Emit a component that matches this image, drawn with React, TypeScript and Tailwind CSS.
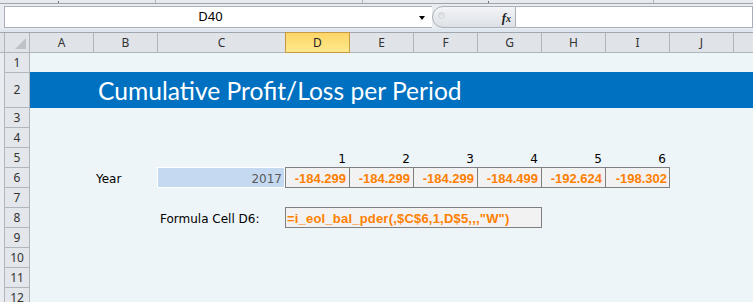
import React from 'react';

const COLS = [
  { id: 'A', w: 'w-[64px]' },
  { id: 'B', w: 'w-[64px]' },
  { id: 'C', w: 'w-[128px]' },
  { id: 'D', w: 'w-[64px]' },
  { id: 'E', w: 'w-[64px]' },
  { id: 'F', w: 'w-[64px]' },
  { id: 'G', w: 'w-[64px]' },
  { id: 'H', w: 'w-[64px]' },
  { id: 'I', w: 'w-[64px]' },
  { id: 'J', w: 'w-[64px]' },
];

const VALUES = ['-184.299', '-184.299', '-184.299', '-184.499', '-192.624', '-198.302'];

const CELL_FONT = "font-['DejaVu_Sans',sans-serif] text-[12px] leading-[18px] pt-[2px]";
const ORANGE_FONT = "font-['Liberation_Sans',Arial,sans-serif] text-[13px] font-bold leading-[18px] pt-[2px] text-[#ff8000]";

function RowHead({ n, h = 'h-[20px]' }: { n: number; h?: string }) {
  return (
    <div className={`${h} w-[26px] shrink-0 border-x border-b border-[#b1b6bc] bg-[#e3e6ea] flex items-center justify-center font-['Noto_Sans',sans-serif] text-[12px] text-[#333]`}>
      {n}
    </div>
  );
}

export default function App() {
  return (
    <div className="w-[753px] h-[302px] overflow-hidden bg-[#e9edf2] select-none">
      {/* Ribbon remains */}
      <div className="relative h-[4px] border-b border-[#9ea5ad] bg-[#e6eaef]">
        <span className="absolute left-[58px] bottom-0 h-[2px] w-px bg-[#6b7077]" />
        <span className="absolute left-[155px] top-0 h-full w-px bg-[#b4bac1]" />
        <span className="absolute left-[362px] top-0 h-full w-px bg-[#b4bac1]" />
        <span className="absolute left-[488px] bottom-0 h-[2px] w-px bg-[#6b7077]" />
        <span className="absolute left-[653px] top-0 h-full w-px bg-[#b4bac1]" />
      </div>

      {/* Formula bar */}
      <div className="flex h-[25px] pl-[4px] pt-[2px]">
        <div className="relative flex h-[22px] w-[428px] items-center border border-r-0 border-[#a9b0b8] bg-white">
          <span className="w-[411px] text-center font-['Noto_Sans',sans-serif] text-[13px] text-black">D40</span>
          <span className="absolute left-[414px] top-[9px] h-0 w-0 border-x-[3px] border-t-[4px] border-x-transparent border-t-black" />
        </div>
        <div className="relative flex h-[22px] w-[84px] items-center rounded-l-[11px] border border-[#a9b0b8] bg-gradient-to-b from-[#f3f5f7] to-[#dde1e6]">
          <span className="absolute left-[5px] top-[5px] h-[7px] w-[7px] rounded-full bg-gradient-to-b from-[#d5d9de] to-[#eef0f2] border border-[#cfd3d8]" />
          <span className="absolute right-[4px] top-[1px] font-['Liberation_Serif',serif] text-[13px] font-bold italic text-[#222]">
            f<span className="text-[10px]">x</span>
          </span>
        </div>
        <div className="h-[22px] flex-1 border border-l-0 border-[#a9b0b8] bg-white" />
      </div>

      {/* Separator */}
      <div className="h-[4px] border-b border-[#a0a7af] bg-[#dfe6ee]" />

      {/* Column headers */}
      <div className="flex h-[20px] border-b border-[#b1b6bc] bg-[#e0e3e8] pl-[4px] font-['Noto_Sans',sans-serif] text-[12px] text-[#333]">
        <div className="relative w-[26px] shrink-0 border-x border-[#b1b6bc]">
          <span className="absolute bottom-[3px] right-[3px] h-0 w-0 border-l-[11px] border-t-[11px] border-l-transparent border-t-transparent border-b-0 border-r-[11px] border-r-[#bfc3c8]" />
        </div>
        {COLS.map((c) =>
          c.id === 'D' ? (
            <div
              key={c.id}
              className="-my-px -ml-px flex w-[65px] shrink-0 items-center justify-center border border-[#c69a45] bg-gradient-to-b from-[#fdd566] to-[#ffe98c] text-[#222]"
            >
              {c.id}
            </div>
          ) : (
            <div key={c.id} className={`${c.w} flex shrink-0 items-center justify-center border-r border-[#b1b6bc]`}>
              {c.id}
            </div>
          )
        )}
        <div className="flex-1" />
      </div>

      {/* Rows */}
      <div className="pl-[4px]">
        {/* 1 */}
        <div className="flex">
          <RowHead n={1} />
          <div className="flex-1 border-b border-[#0070c0] bg-[#eef5f9]" />
        </div>
        {/* 2 */}
        <div className="flex">
          <RowHead n={2} h="h-[35px]" />
          <div className="flex-1 bg-[#0070c0] pl-[68px] pt-[3px] font-['Lato',sans-serif] text-[24.6px] leading-[30px] text-white">
            Cumulative Profit/Loss per Period
          </div>
        </div>
        {/* 3, 4 */}
        {[3, 4].map((n) => (
          <div key={n} className="flex">
            <RowHead n={n} />
            <div className="flex-1 bg-[#eef5f9]" />
          </div>
        ))}
        {/* 5 */}
        <div className="flex">
          <RowHead n={5} />
          <div className={`flex flex-1 bg-[#eef5f9] text-black ${CELL_FONT}`}>
            <div className="w-[256px] shrink-0" />
            {[1, 2, 3, 4, 5, 6].map((n) => (
              <div key={n} className="w-[64px] shrink-0 pr-[4px] text-right">
                {n}
              </div>
            ))}
          </div>
        </div>
        {/* 6 */}
        <div className="flex">
          <RowHead n={6} />
          <div className="flex flex-1 bg-[#eef5f9]">
            <div className="w-[64px] shrink-0" />
            <div className={`w-[63px] shrink-0 pl-[2px] text-black ${CELL_FONT}`}>Year</div>
            <div className={`-mt-px h-[21px] w-[128px] shrink-0 border border-white bg-[#c5d9f1] pr-[2px] text-right text-[#595959] ${CELL_FONT} pt-[1px]`}>
              2017
            </div>
            <div className="-mt-px flex h-[21px] w-[385px] shrink-0 border border-[#7f7f7f] bg-[#f2f2f2]">
              {VALUES.map((v, i) => (
                <div
                  key={i}
                  className={`w-[64px] shrink-0 pr-[3px] text-right ${ORANGE_FONT} pt-[1px] ${i < 5 ? 'border-r border-[#7f7f7f]' : 'w-[63px]'}`}
                >
                  {v}
                </div>
              ))}
            </div>
          </div>
        </div>
        {/* 7 */}
        <div className="flex">
          <RowHead n={7} />
          <div className="flex-1 bg-[#eef5f9]" />
        </div>
        {/* 8 */}
        <div className="flex">
          <RowHead n={8} />
          <div className="flex flex-1 bg-[#eef5f9]">
            <div className="w-[128px] shrink-0" />
            <div className={`w-[127px] shrink-0 pl-[2px] text-black ${CELL_FONT}`}>Formula Cell D6:</div>
            <div className={`-mt-px h-[21px] w-[257px] shrink-0 border border-[#7f7f7f] bg-[#f2f2f2] pl-[1px] tracking-[0.2px] ${ORANGE_FONT} pt-[1px]`}>
              =i_eol_bal_pder(,$C$6,1,D$5,,,"W")
            </div>
          </div>
        </div>
        {/* 9 - 12 */}
        {[9, 10, 11, 12].map((n) => (
          <div key={n} className="flex">
            <RowHead n={n} />
            <div className="flex-1 bg-[#eef5f9]" />
          </div>
        ))}
      </div>
    </div>
  );
}
